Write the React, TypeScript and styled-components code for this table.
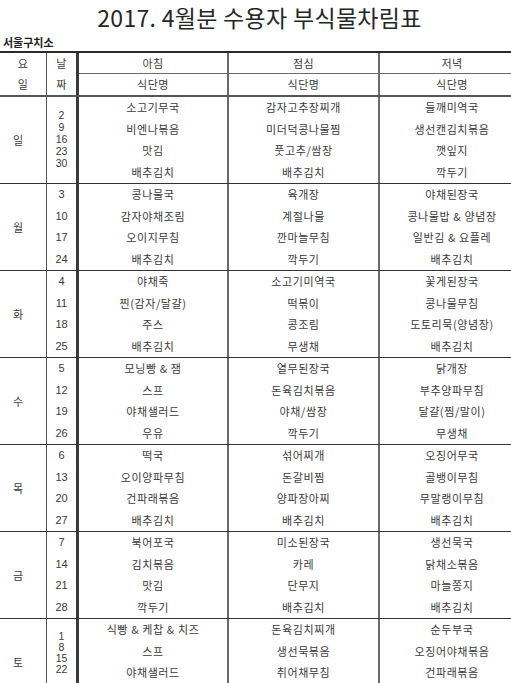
import styled, { createGlobalStyle } from "styled-components";

const GlobalStyle = createGlobalStyle`
  html, body {
    margin: 0;
    padding: 0;
    background: #fff;
    overflow: hidden;
  }
  body {
    font-family: "Noto Sans CJK KR", "Noto Sans", sans-serif;
    color: #3a3a3a;
  }
`;

const Page = styled.div`
  width: 511px;
  height: 683px;
  overflow: hidden;
`;

const Title = styled.h1`
  margin: 0;
  height: 33px;
  padding-left: 8px;
  line-height: 34px;
  font-size: 23px;
  font-weight: 400;
  letter-spacing: 0.3px;
  text-align: center;
  color: #262626;
  white-space: nowrap;
`;

const Org = styled.div`
  height: 18px;
  padding-left: 3px;
  line-height: 18px;
  font-size: 11px;
  font-weight: 700;
  color: #222;
`;

const Table = styled.div`
  width: 524px;
  border-top: 2px solid #2a2a2a;
`;

type Edge = "thin" | "thick" | "mid" | "none";

const edges: Record<Edge, string> = {
  thin: "1px solid #555",
  thick: "3px solid #3a3a3a",
  mid: "2px solid #6a6a6a",
  none: "0",
};

const HeadRow = styled.div`
  display: flex;
  border-bottom: 2px solid #555;
`;

const Section = styled.div<{ $rows: number }>`
  display: flex;
  height: ${(p) => p.$rows * 21.5}px;
  border-bottom: 1px solid #333;
`;

const Column = styled.div<{ $w: number; $edge: Edge }>`
  flex: none;
  box-sizing: border-box;
  width: ${(p) => p.$w}px;
  display: flex;
  flex-direction: column;
  border-right: ${(p) => edges[p.$edge]};
`;

const HeadCell = styled.div<{ $divider?: boolean; $h: number }>`
  box-sizing: border-box;
  height: ${(p) => p.$h}px;
  line-height: ${(p) => p.$h - (p.$divider ? 1 : 0)}px;
  font-size: 11px;
  letter-spacing: 0.5px;
  text-align: center;
  border-bottom: ${(p) => (p.$divider ? "1px solid #6a6a6a" : "0")};
`;

const DayLabel = styled.div`
  flex: 1;
  display: flex;
  align-items: center;
  justify-content: center;
  padding-right: 10px;
  font-size: 11px;
`;

const DateStack = styled.div<{ $gap: number }>`
  display: flex;
  flex-direction: column;
  align-items: center;
  padding-top: 12px;
  font-family: "Liberation Sans", Arial, sans-serif;
  font-size: 10.5px;
  line-height: ${(p) => p.$gap}px;
`;

const DateItem = styled.div`
  height: 21.5px;
  line-height: 21.5px;
  font-family: "Liberation Sans", Arial, sans-serif;
  font-size: 11px;
  text-align: center;
`;

const Item = styled.div`
  height: 21.5px;
  line-height: 21.5px;
  font-size: 11px;
  letter-spacing: 0.6px;
  text-align: center;
  white-space: nowrap;
`;

const WIDTHS: [number, Edge][] = [
  [47, "thin"],
  [32, "thick"],
  [150, "mid"],
  [151, "mid"],
  [144, "none"],
];

interface Day {
  name: string;
  dates: number[];
  stacked?: number;
  meals: [string[], string[], string[]];
}

const days: Day[] = [
  {
    name: "일",
    dates: [2, 9, 16, 23, 30],
    stacked: 12,
    meals: [
      ["소고기무국", "비엔나볶음", "맛김", "배추김치"],
      ["감자고추장찌개", "미더덕콩나물찜", "풋고추/쌈장", "배추김치"],
      ["들깨미역국", "생선캔김치볶음", "깻잎지", "깍두기"],
    ],
  },
  {
    name: "월",
    dates: [3, 10, 17, 24],
    meals: [
      ["콩나물국", "감자야채조림", "오이지무침", "배추김치"],
      ["육개장", "계절나물", "깐마늘무침", "깍두기"],
      ["야채된장국", "콩나물밥 & 양념장", "일반김  &  요플레", "배추김치"],
    ],
  },
  {
    name: "화",
    dates: [4, 11, 18, 25],
    meals: [
      ["야채죽", "찐(감자/달걀)", "주스", "배추김치"],
      ["소고기미역국", "떡볶이", "콩조림", "무생채"],
      ["꽃게된장국", "콩나물무침", "도토리묵(양념장)", "배추김치"],
    ],
  },
  {
    name: "수",
    dates: [5, 12, 19, 26],
    meals: [
      ["모닝빵 & 잼", "스프", "야채샐러드", "우유"],
      ["열무된장국", "돈육김치볶음", "야채/쌈장", "깍두기"],
      ["닭개장", "부추양파무침", "달걀(찜/말이)", "무생채"],
    ],
  },
  {
    name: "목",
    dates: [6, 13, 20, 27],
    meals: [
      ["떡국", "오이양파무침", "건파래볶음", "배추김치"],
      ["섞어찌개", "돈갈비찜", "양파장아찌", "배추김치"],
      ["오징어무국", "골뱅이무침", "무말랭이무침", "배추김치"],
    ],
  },
  {
    name: "금",
    dates: [7, 14, 21, 28],
    meals: [
      ["북어포국", "김치볶음", "맛김", "깍두기"],
      ["미소된장국", "카레", "단무지", "배추김치"],
      ["생선묵국", "닭채소볶음", "마늘쫑지", "배추김치"],
    ],
  },
  {
    name: "토",
    dates: [1, 8, 15, 22],
    stacked: 11,
    meals: [
      ["식빵 & 케찹 & 치즈", "스프", "야채샐러드"],
      ["돈육김치찌개", "생선묵볶음", "취어채무침"],
      ["순두부국", "오징어야채볶음", "건파래볶음"],
    ],
  },
];

const mealNames = ["아침", "점심", "저녁"];

export default function App() {
  return (
    <Page>
      <GlobalStyle />
      <Title>2017. 4월분 수용자 부식물차림표</Title>
      <Org>서울구치소</Org>
      <Table>
        <HeadRow>
          <Column $w={WIDTHS[0][0]} $edge={WIDTHS[0][1]}>
            <HeadCell $h={21}>요</HeadCell>
            <HeadCell $h={21}>일</HeadCell>
          </Column>
          <Column $w={WIDTHS[1][0]} $edge={WIDTHS[1][1]}>
            <HeadCell $h={21}>날</HeadCell>
            <HeadCell $h={21}>짜</HeadCell>
          </Column>
          {mealNames.map((m, i) => (
            <Column key={m} $w={WIDTHS[i + 2][0]} $edge={WIDTHS[i + 2][1]}>
              <HeadCell $h={21} $divider>
                {m}
              </HeadCell>
              <HeadCell $h={21}>식단명</HeadCell>
            </Column>
          ))}
        </HeadRow>
        {days.map((d) => (
          <Section key={d.name} $rows={4}>
            <Column $w={WIDTHS[0][0]} $edge={WIDTHS[0][1]}>
              <DayLabel>{d.name}</DayLabel>
            </Column>
            <Column $w={WIDTHS[1][0]} $edge={WIDTHS[1][1]}>
              {d.stacked ? (
                <DateStack $gap={d.stacked}>
                  {d.dates.map((n) => (
                    <span key={n}>{n}</span>
                  ))}
                </DateStack>
              ) : (
                d.dates.map((n) => <DateItem key={n}>{n}</DateItem>)
              )}
            </Column>
            {d.meals.map((list, i) => (
              <Column key={i} $w={WIDTHS[i + 2][0]} $edge={WIDTHS[i + 2][1]}>
                {list.map((food, j) => (
                  <Item key={j}>{food}</Item>
                ))}
              </Column>
            ))}
          </Section>
        ))}
      </Table>
    </Page>
  );
}
